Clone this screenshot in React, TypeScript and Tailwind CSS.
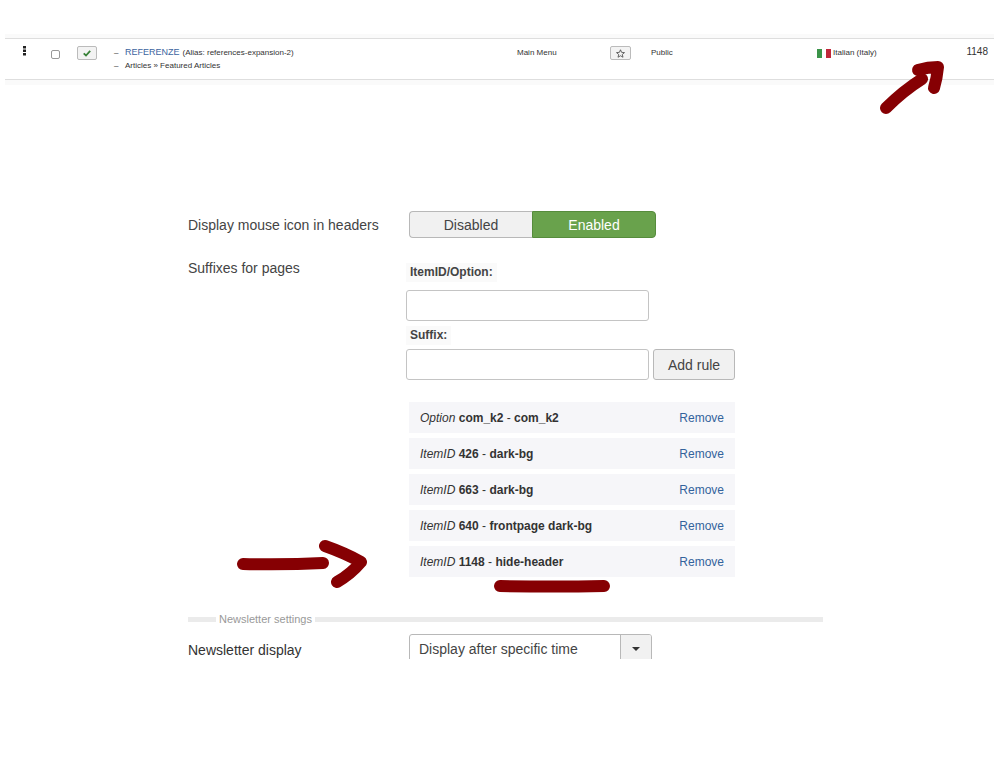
import React from "react";

const rules = [
  { type: "Option", id: "com_k2", suffix: "com_k2" },
  { type: "ItemID", id: "426", suffix: "dark-bg" },
  { type: "ItemID", id: "663", suffix: "dark-bg" },
  { type: "ItemID", id: "640", suffix: "frontpage dark-bg" },
  { type: "ItemID", id: "1148", suffix: "hide-header", marked: true },
];

const MenuItemRow = () => {
  return (
    <section className="relative ml-[5px] mr-[6px]">
      <div className="h-1 bg-[#fafafa]" />
      <table className="w-full table-fixed border-y border-[#dedede] text-[8px] leading-[14px] text-[#333]">
        <colgroup>
          <col className="w-[38px]" />
          <col className="w-[24px]" />
          <col className="w-[40px]" />
          <col />
          <col className="w-[93px]" />
          <col className="w-[41px]" />
          <col className="w-[166px]" />
          <col className="w-[117px]" />
          <col className="w-[60px]" />
        </colgroup>
        <tbody>
          <tr className="align-top">
            <td className="pt-[7px]">
              <svg width="3" height="10" viewBox="0 0 3 10" fill="#222" className="mx-auto">
                <rect width="3" height="2.5" />
                <rect y="3.5" width="3" height="2.5" />
                <rect y="7" width="3" height="2.5" />
              </svg>
            </td>
            <td className="pt-[11px]">
              <input
                type="checkbox"
                aria-label="Select REFERENZE"
                className="mx-auto block h-[9px] w-[9px] appearance-none rounded-[2px] border border-[#999] bg-white"
              />
            </td>
            <td className="pt-[7px]">
              <button
                type="button"
                aria-label="Published"
                className="mx-auto flex h-[14px] w-5 items-center justify-center rounded-[2px] border border-[#bbb] bg-[#f3f3f3]"
              >
                <svg width="8" height="7" viewBox="0 0 8 7" fill="none" stroke="#378137" strokeWidth="1.8">
                  <path d="M0.7 3.4L3 5.5L7.2 0.9" />
                </svg>
              </button>
            </td>
            <td className="pb-[6px] pl-[7px] pt-[6px]">
              <div className="flex h-[14px] items-baseline">
                <span className="w-[11px]">–</span>
                <a href="#" className="mr-[3px] text-[9px] text-[#3b64a0]">
                  REFERENZE
                </a>
                <span>(Alias: references-expansion-2)</span>
              </div>
              <div className="flex h-[14px]">
                <span className="w-[11px]">–</span>
                <span>Articles » Featured Articles</span>
              </div>
            </td>
            <td className="pt-[7px]">Main Menu</td>
            <td className="pt-[7px]">
              <button
                type="button"
                aria-label="Set as home"
                className="flex h-[14px] w-[21px] items-center justify-center rounded-[2px] border border-[#bbb] bg-[#f3f3f3]"
              >
                <svg width="9" height="9" viewBox="0 0 18 18" fill="none" stroke="#444" strokeWidth="1.6">
                  <path d="M9 1.5L11.2 6.7L17 7.2L12.6 10.9L14 16.5L9 13.5L4 16.5L5.4 10.9L1 7.2L6.8 6.7Z" />
                </svg>
              </button>
            </td>
            <td className="pt-[7px]">Public</td>
            <td className="pt-[7px]">
              <div className="flex items-center gap-[2px]">
                <svg width="14" height="9" viewBox="0 0 14 9">
                  <rect width="5" height="9" fill="#3b9449" />
                  <rect x="5" width="4" height="9" fill="#fff" />
                  <rect x="9" width="5" height="9" fill="#c0283a" />
                </svg>
                <span>Italian (Italy)</span>
              </div>
            </td>
            <td className="pr-[6px] pt-[6px] text-right text-[10px]">1148</td>
          </tr>
        </tbody>
      </table>
      <div className="h-[5px] bg-[#fafafa]" />

      {/* arrow pointing at the item id */}
      <svg
        width="66"
        height="56"
        viewBox="0 0 66 56"
        fill="none"
        stroke="#860003"
        strokeWidth="12"
        strokeLinecap="round"
        strokeLinejoin="round"
        className="absolute right-[49px] top-[26px]"
      >
        <path d="M7 48Q24 31 43 19" />
        <path d="M39 10Q49 7 59 7Q58 18 55 28" />
      </svg>
    </section>
  );
};

const RuleMarks = () => {
  return (
    <>
      <svg
        width="132"
        height="50"
        viewBox="0 0 132 50"
        fill="none"
        stroke="#860003"
        strokeWidth="12"
        strokeLinecap="round"
        strokeLinejoin="round"
        className="absolute right-full top-[-7px] mr-[41px]"
      >
        <path d="M7 25Q50 26 87 24" />
        <path d="M89 7Q109 14 125 23Q115 35 101 43" />
      </svg>
      <svg width="118" height="14" viewBox="0 0 118 14" className="absolute left-[84px] top-[33px]">
        <path d="M7 7Q60 8 111 7" fill="none" stroke="#860003" strokeWidth="12" strokeLinecap="round" />
      </svg>
    </>
  );
};

const RuleList = () => {
  return (
    <ul className="ml-[3px] mt-[22px] flex w-[326px] flex-col gap-[5px] text-xs">
      {rules.map((rule) => (
        <li
          key={rule.id}
          className="relative flex h-[31px] items-center justify-between bg-[#f6f6f9] px-[11px] text-[#333]"
        >
          <span>
            <em>{rule.type}</em> <strong>{rule.id}</strong> - <strong>{rule.suffix}</strong>
          </span>
          <a href="#" className="text-[#33639c]">
            Remove
          </a>
          {rule.marked && <RuleMarks />}
        </li>
      ))}
    </ul>
  );
};

export default function App() {
  return (
    <main className="bg-white pb-28 pt-[34px] font-['Liberation_Sans',Arial,sans-serif] text-[#444]">
      <MenuItemRow />

      <form className="ml-[188px] mr-[177px] mt-[126px] text-sm" onSubmit={(e) => e.preventDefault()}>
        {/* mouse icon toggle */}
        <div className="grid grid-cols-[218px_1fr]">
          <span id="mouse-icon" className="pt-1">
            Display mouse icon in headers
          </span>
          <div role="group" aria-labelledby="mouse-icon" className="ml-[3px] flex h-[27px] w-[247px]">
            <button type="button" className="flex-1 rounded-l-[4px] border border-r-0 border-[#b8b8b8] bg-[#f1f1f1]">
              Disabled
            </button>
            <button type="button" className="flex-1 rounded-r-[4px] border border-[#568c3c] bg-[#69a24c] text-white">
              Enabled
            </button>
          </div>
        </div>

        {/* suffix rules */}
        <div className="mt-5 grid grid-cols-[218px_1fr]">
          <span>Suffixes for pages</span>
          <div className="pt-[5px]">
            <label htmlFor="item-id" className="block w-fit bg-[#fafafa] px-1 text-xs font-bold leading-[19px]">
              ItemID/Option:
            </label>
            <input
              id="item-id"
              type="text"
              className="mt-2 block h-[31px] w-[243px] rounded-[3px] border border-[#c4c4c4] px-2"
            />
            <label htmlFor="suffix" className="mt-[5px] block w-fit bg-[#fafafa] px-1 text-xs font-bold leading-[19px]">
              Suffix:
            </label>
            <div className="mt-1 flex gap-1">
              <input id="suffix" type="text" className="h-[31px] w-[243px] rounded-[3px] border border-[#c4c4c4] px-2" />
              <button type="button" className="h-[31px] w-[82px] rounded-[3px] border border-[#b8b8b8] bg-[#f1f1f1]">
                Add rule
              </button>
            </div>
            <RuleList />
          </div>
        </div>

        {/* newsletter */}
        <div className="mt-[34px] flex items-center gap-[3px]">
          <span className="h-[5px] w-7 bg-[#ebebeb]" />
          <h2 className="text-[11px] leading-4 text-[#999]">Newsletter settings</h2>
          <span className="h-[5px] flex-1 bg-[#ebebeb]" />
        </div>
        <div className="mt-[7px] grid h-[25px] grid-cols-[218px_1fr] overflow-hidden">
          <label htmlFor="newsletter" className="pt-[6px] text-[#333]">
            Newsletter display
          </label>
          <div className="relative ml-[3px] h-[29px] w-[243px]">
            <select
              id="newsletter"
              className="h-full w-full appearance-none rounded-[3px] border border-[#b8b8b8] bg-white pl-[9px] pr-9"
            >
              <option>Display after specific time</option>
            </select>
            <span className="pointer-events-none absolute inset-y-px right-px flex w-[31px] items-center justify-center rounded-r-[2px] border-l border-[#b8b8b8] bg-[#f1f1f1]">
              <svg width="8" height="4" viewBox="0 0 8 4" fill="#333">
                <path d="M0 0H8L4 4Z" />
              </svg>
            </span>
          </div>
        </div>
      </form>
    </main>
  );
}
